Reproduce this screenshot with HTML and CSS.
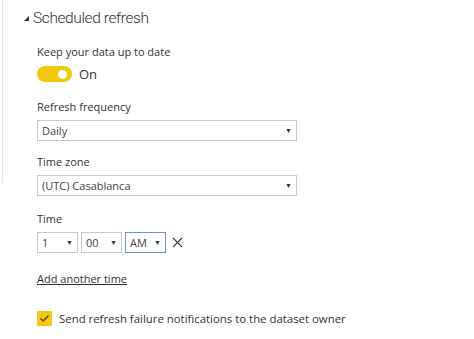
FILE: index.html
```html
<!DOCTYPE html>
<html lang="en">
<head>
<meta charset="utf-8">
<link rel="stylesheet" href="styles.css">
</head>
<body>
<div class="page">
  <div class="rail"></div>
  <div class="content">
    <div class="header">
      <span class="caret"></span>
      <h2 class="title">Scheduled refresh</h2>
    </div>
    <div class="section">
      <div class="label">Keep your data up to date</div>
      <div class="toggle-row">
        <span class="toggle"><span class="knob"></span></span>
        <span class="toggle-text">On</span>
      </div>
      <div class="label label-gap">Refresh frequency</div>
      <div class="select wide"><span class="val">Daily</span><span class="arrow">▼</span></div>
      <div class="label label-gap2">Time zone</div>
      <div class="select wide"><span class="val">(UTC) Casablanca</span><span class="arrow">▼</span></div>
      <div class="label label-gap3">Time</div>
      <div class="time-row">
        <div class="select small"><span class="val">1</span><span class="arrow">▼</span></div>
        <div class="select small"><span class="val">00</span><span class="arrow">▼</span></div>
        <div class="select small focus"><span class="val">AM</span><span class="arrow">▼</span></div>
        <svg class="close" width="12" height="12" viewBox="0 0 12 12"><path d="M1 1 L11 11 M11 1 L1 11" stroke="#333" stroke-width="1.4" fill="none"/></svg>
      </div>
      <a class="add-link" href="#">Add another time</a>
      <div class="check-row">
        <span class="checkbox"><svg width="11" height="9" viewBox="0 0 11 9"><path d="M1.5 4.5 L4.2 7 L9.5 1.5" stroke="#5a4a00" stroke-width="1.3" fill="none"/></svg></span>
        <span class="check-text">Send refresh failure notifications to the dataset owner</span>
      </div>
    </div>
  </div>
</div>
</body>
</html>
```
FILE: styles.css
```css
html, body {
  margin: 0;
  padding: 0;
  background: #ffffff;
}
body {
  font-family: "Open Sans", "Noto Sans", sans-serif;
  color: #333333;
}
.page {
  position: relative;
  width: 474px;
  height: 339px;
  display: flex;
  overflow: hidden;
}
.rail {
  position: absolute;
  left: 2px;
  top: 0;
  width: 1px;
  height: 183px;
  background: #e6e6e6;
}
.content {
  padding-left: 24px;
}
.header {
  display: flex;
  align-items: center;
  gap: 4px;
  height: 24px;
  margin-top: 6px;
}
.caret {
  width: 0;
  height: 0;
  border-left: 5px solid transparent;
  border-bottom: 5px solid #333;
  margin-top: 1px;
}
.title {
  margin: 0;
  font-family: "Roboto", "Open Sans", sans-serif;
  font-size: 15.5px;
  font-weight: 300;
  letter-spacing: -0.4px;
  line-height: 24px;
  color: #333;
}
.section {
  padding-left: 13px;
  padding-top: 14px;
  display: flex;
  flex-direction: column;
  align-items: flex-start;
}
.label {
  font-size: 11px;
  line-height: 15px;
  color: #333;
}
.toggle-row {
  display: flex;
  align-items: center;
  gap: 7px;
  margin-top: 7px;
}
.toggle {
  width: 35px;
  height: 16px;
  border-radius: 8px;
  background: #f2c811;
  display: flex;
  align-items: center;
  justify-content: flex-end;
  padding-right: 5px;
  box-sizing: border-box;
}
.knob {
  width: 9px;
  height: 9px;
  border-radius: 50%;
  background: #fff;
}
.toggle-text {
  font-size: 13px;
  line-height: 16px;
}
.label-gap { margin-top: 17px; }
.label-gap2 { margin-top: 13px; }
.label-gap3 { margin-top: 15px; }
.select {
  box-sizing: border-box;
  height: 21px;
  border: 1px solid #c8c8c8;
  display: flex;
  align-items: center;
  justify-content: space-between;
  padding: 0 4px 0 4px;
  font-size: 11px;
  background: #fff;
  margin-top: 6px;
}
.select.wide { width: 260px; }
.select.small { width: 41px; margin-top: 0; }
.select.focus { border-color: #6e8fd1; }
.val { color: #444; }
.arrow {
  font-size: 7px;
  color: #333;
}
.time-row {
  display: flex;
  align-items: center;
  gap: 3px;
  margin-top: 6px;
}
.close { margin-left: 3px; width: 11px; height: 11px; }
.add-link {
  margin-top: 18px;
  font-size: 11px;
  color: #333;
  text-decoration: underline;
}
.check-row {
  display: flex;
  align-items: center;
  gap: 7px;
  margin-top: 25px;
}
.checkbox {
  width: 15px;
  height: 15px;
  background: #f2c811;
  display: flex;
  align-items: center;
  justify-content: center;
}
.check-text {
  font-size: 11.4px;
  color: #333;
}
```
